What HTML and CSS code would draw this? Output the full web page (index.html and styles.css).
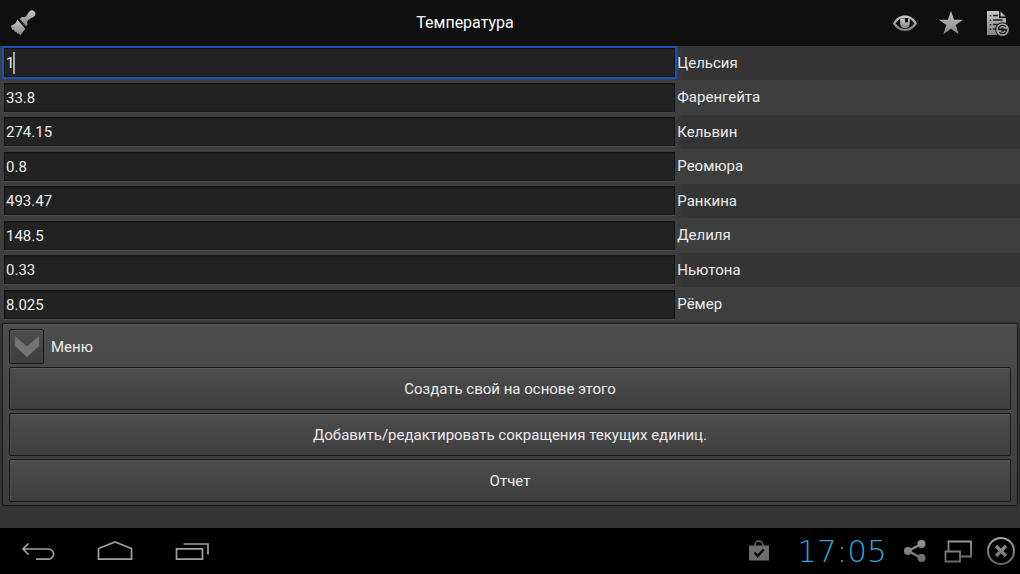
FILE: index.html
```html
<!DOCTYPE html>
<html lang="ru">
<head>
<meta charset="utf-8">
<meta name="viewport" content="width=device-width, initial-scale=1">
<title>Температура</title>
<link rel="stylesheet" href="styles.css">
</head>
<body>
<svg class="defs" aria-hidden="true">
  <defs>
    <linearGradient id="metal" x1="0" y1="0" x2="0" y2="1"><stop offset="0" stop-color="#c6c6c6"/><stop offset="1" stop-color="#838383"/></linearGradient>
    <linearGradient id="steel" gradientUnits="userSpaceOnUse" x1="0" y1="0" x2="0" y2="28"><stop offset="0" stop-color="#a0a0a0"/><stop offset="1" stop-color="#626262"/></linearGradient>
  </defs>
</svg>
<header class="topbar">
  <div class="topbar-side">
    <button class="icon-btn" aria-label="Тема">
      <svg width="26" height="26" viewBox="0 0 26 26"><path fill="url(#metal)" d="M19.500 1.500a3.300 3.300 0 0 1 5 4.400c-.5.900-1.200 1.300-2.200 1.700l-4 2.300-1.300 2 .6 2.600-2 2.600-6.600-7.800 3-2.300 2.700.2 2-1.600 1.500-2.600z"/><path fill="url(#metal)" d="M7.600 9.600l7.800 9.200-5 6.400-1.600-1.700-1.500.2-.7-1.900-1.700.1-.8-1.900-1.600-.2L.8 16l4.500-2.600z"/><path stroke="#111" stroke-width="2" d="M8.500 9l7.500 9"/></svg>
    </button>
  </div>
  <h1 class="title">Температура</h1>
  <div class="topbar-side topbar-actions">
    <button class="icon-btn" aria-label="Просмотр">
      <svg width="26" height="26" viewBox="0 0 26 26"><path fill="url(#metal)" fill-rule="evenodd" d="M1 13.500C4 8 8 5.600 13 5.600s9 2.400 12 7.900c-3 5-7 7.400-12 7.400S4 18.500 1 13.500zm2.600 0c2.400 3.600 5.400 5.400 9.400 5.400s7-1.800 9.400-5.400C20.500 10.500 18 8.500 16 8h-6c-2 .5-4.500 2.500-6.400 5.500z"/><path fill="url(#metal)" fill-rule="evenodd" d="M8.200 8.500h9.600v5a4.800 4.800 0 0 1-9.600 0zm4.800 0v3.700h3V8.500z"/></svg>
    </button>
    <button class="icon-btn" aria-label="Избранное">
      <svg width="26" height="26" viewBox="0 0 26 26"><path fill="url(#metal)" d="M13 1l3 8.700h9l-7.200 5.300 2.800 9.200-7.600-5.500-7.600 5.500L8.200 15 1 9.700h9z"/></svg>
    </button>
    <button class="icon-btn" aria-label="Отчет по единицам">
      <svg width="26" height="26" viewBox="0 0 26 26"><path fill="url(#metal)" d="M3 1h13l6 6v18H3z"/><path fill="#111" d="M15 1h1.500v5.500H22V8h-7z"/><path stroke="#222" stroke-width="1.300" d="M9 5.500h5M9 10h9.500M9 14.500h5M9 19h3"/><path stroke="#222" stroke-width="1.500" stroke-dasharray="1.500 3" d="M6.500 5v16"/><circle cx="18.500" cy="19.500" r="7.300" fill="#171717"/><circle cx="18.500" cy="19.500" r="5.600" fill="none" stroke="#aaa" stroke-width="1.500"/><path fill="none" stroke="#aaa" stroke-width="1.300" d="M15.800 18.300c1.300-2 4-2 5.200-.3M16 21c1.300 2 4 2 5.200-.3"/><path fill="#aaa" d="M19 18.800h4v-2.600zM18 20.300h-4v2.600z"/></svg>
    </button>
  </div>
</header>

<main class="content">
  <form class="units">
    <div class="unit is-active"><span class="field"><input id="u1" type="text" value="1"><i class="caret"></i></span><label for="u1">Цельсия</label></div>
    <div class="unit"><span class="field"><input id="u2" type="text" value="33.8"></span><label for="u2">Фаренгейта</label></div>
    <div class="unit"><span class="field"><input id="u3" type="text" value="274.15"></span><label for="u3">Кельвин</label></div>
    <div class="unit"><span class="field"><input id="u4" type="text" value="0.8"></span><label for="u4">Реомюра</label></div>
    <div class="unit"><span class="field"><input id="u5" type="text" value="493.47"></span><label for="u5">Ранкина</label></div>
    <div class="unit"><span class="field"><input id="u6" type="text" value="148.5"></span><label for="u6">Делиля</label></div>
    <div class="unit"><span class="field"><input id="u7" type="text" value="0.33"></span><label for="u7">Ньютона</label></div>
    <div class="unit"><span class="field"><input id="u8" type="text" value="8.025"></span><label for="u8">Рёмер</label></div>
  </form>

  <section class="menu">
    <div class="menu-head">
      <button class="toggle" id="toggle" aria-labelledby="menu-label" aria-expanded="true">
        <svg width="24" height="22" viewBox="0 0 24 22"><path fill="#747474" d="M0 0l12 10.500L24 0v10L12 21 0 10z"/></svg>
      </button>
      <span id="menu-label">Меню</span>
    </div>
    <button class="action">Создать свой на основе этого</button>
    <button class="action">Добавить/редактировать сокращения текущих единиц.</button>
    <button class="action">Отчет</button>
  </section>
</main>

<footer class="navbar">
  <nav class="nav-keys">
    <button class="icon-btn" aria-label="Назад">
      <svg width="36" height="28" viewBox="0 0 36 28"><path fill="none" stroke="#a0a0a0" stroke-width="1.700" d="M8.500 6.500L3 12l5.500 5.500M3 12h25.500a5 5 0 0 1 0 10.200H16"/></svg>
    </button>
    <button class="icon-btn" aria-label="Домой">
      <svg width="36" height="28" viewBox="0 0 36 28"><path fill="none" stroke="#a0a0a0" stroke-width="1.700" d="M1.500 22.200V11.500L18 5l16.500 6.500v10.700z"/></svg>
    </button>
    <button class="icon-btn" aria-label="Недавние">
      <svg width="36" height="28" viewBox="0 0 36 28"><path fill="none" stroke="#a0a0a0" stroke-width="1.700" d="M2.500 11.800h26v10.400h-26zM9.500 7H34v10.500"/></svg>
    </button>
  </nav>
  <div class="status">
    <svg class="bag" width="20" height="22" viewBox="0 0 20 22"><path fill="#6c6c6c" d="M0 5.500h20v15H0z"/><path fill="none" stroke="#6c6c6c" stroke-width="1.400" d="M6 6V5a4 4 0 0 1 8 0v1"/><path fill="none" stroke="#000" stroke-width="2.200" d="M5.500 12.500l3.200 3.500 6-6.500"/></svg>
    <time class="clock">17:05</time>
    <button class="icon-btn share" aria-label="Поделиться">
      <svg width="24" height="28" viewBox="0 0 24 28"><path fill="none" stroke="url(#steel)" stroke-width="2.500" d="M18.500 7L5 14l13.500 7"/><circle cx="5" cy="14" r="4" fill="url(#steel)"/><circle cx="18.500" cy="7" r="4" fill="url(#steel)"/><circle cx="18.500" cy="21" r="4" fill="url(#steel)"/></svg>
    </button>
    <button class="icon-btn windows" aria-label="Окна">
      <svg width="28" height="28" viewBox="0 0 28 28"><path fill="none" stroke="url(#steel)" stroke-width="1.800" d="M4.500 13.500V4.500H27v15H16.500M1.500 14.500H16V24.500H1.500z"/></svg>
    </button>
    <button class="icon-btn" aria-label="Закрыть">
      <svg width="30" height="28" viewBox="0 0 30 28"><circle cx="15" cy="14" r="13" fill="none" stroke="url(#steel)" stroke-width="2"/><path stroke="url(#steel)" stroke-width="3.400" d="M10 9l10 10M20 9L10 19"/></svg>
    </button>
  </div>
</footer>
</body>
</html>
```
FILE: styles.css
```css
* {
  box-sizing: border-box;
}

body {
  margin: 0;
  min-height: 100vh;
  display: flex;
  flex-direction: column;
  background: #343434;
  color: #ececec;
  font: 400 15px/20px Roboto, "Liberation Sans", sans-serif;
}

button,
input {
  margin: 0;
  font: inherit;
  color: inherit;
}

.defs {
  position: absolute;
  width: 0;
  height: 0;
}

.icon-btn {
  display: flex;
  padding: 0;
  border: 0;
  background: none;
}

.topbar {
  display: flex;
  align-items: center;
  height: 46px;
  padding: 0 10px;
  background: #0f0f0f;
}

.topbar-side {
  display: flex;
  width: 120px;
}

.topbar-actions {
  justify-content: flex-end;
  gap: 20px;
  width: 210px;
}

.title {
  flex: 1;
  margin: 0;
  font-size: 16px;
  font-weight: 400;
  color: #fff;
  text-align: center;
}

.content {
  flex: 1;
}

.unit {
  display: flex;
  height: 34px;
  background: linear-gradient(90deg, #3e3e3e 66%, #343434 67%);
}

.unit:nth-child(even) {
  height: 35px;
  background: #3e3e3e;
}

.field {
  position: relative;
  width: 66.4%;
  padding: 2px 2px 3px 4px;
}

.unit:nth-child(even) .field {
  padding-top: 3px;
}

.field input {
  display: block;
  width: 100%;
  height: 100%;
  padding: 0 1px;
  border: 1px solid #141414;
  border-bottom-color: #1b1b1b;
  outline: 0;
  background: #222;
  box-shadow: 0 1px #4b4b4b, inset 0 1px #1b1b1b;
}

.is-active input {
  box-shadow: 0 0 0 2px #1b50b4;
}

.caret {
  position: absolute;
  left: 13px;
  top: 6px;
  width: 2px;
  height: 22px;
  background: #a8a8a8;
}

.unit label {
  padding-top: 7px;
}

.menu {
  display: flex;
  flex-direction: column;
  gap: 3px;
  margin: 1px 2px 0;
  padding: 5px 6px 3px;
  border: 1px solid #191919;
  border-radius: 2px;
  background: linear-gradient(#4d4d4d, #3d3d3d);
  box-shadow: inset 0 1px #5c5c5c;
}

.menu-head {
  display: flex;
  align-items: center;
  gap: 7px;
}

.toggle,
.action {
  border: 1px solid #191919;
  border-radius: 2px;
  background: linear-gradient(#4d4d4d, #3e3e3e);
  box-shadow: inset 0 1px #5a5a5a, inset 1px 0 #4b4b4b;
}

.toggle {
  display: flex;
  align-items: center;
  justify-content: center;
  width: 35px;
  height: 35px;
  padding: 0;
}

.action {
  height: 43px;
  padding: 0;
}

.navbar {
  display: flex;
  align-items: center;
  justify-content: space-between;
  height: 46px;
  padding: 0 4px 0 20px;
  background: #000;
}

.nav-keys {
  display: flex;
  gap: 41px;
}

.status {
  display: flex;
  align-items: center;
}

.clock {
  min-width: 94px;
  margin: 0 14px 0 26px;
  font: 200 31px/34px "DejaVu Sans Light", "DejaVu Sans", sans-serif;
  color: #2fa9d8;
  text-align: center;
}

.share {
  margin-right: 17px;
}

.windows {
  margin-right: 14px;
}
```
